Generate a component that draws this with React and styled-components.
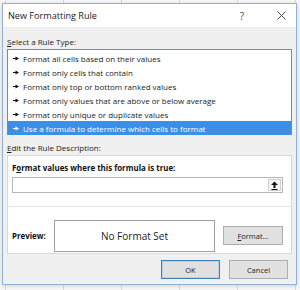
import React from "react";
import styled, { createGlobalStyle } from "styled-components";

const GlobalStyle = createGlobalStyle`
  html, body {
    margin: 0;
    padding: 0;
  }
  body {
    font-family: "Open Sans", "Noto Sans", sans-serif;
    color: #1b1b1b;
  }
`;

const rules = [
  "Format all cells based on their values",
  "Format only cells that contain",
  "Format only top or bottom ranked values",
  "Format only values that are above or below average",
  "Format only unique or duplicate values",
  "Use a formula to determine which cells to format",
];

const Page = styled.div`
  width: 300px;
  height: 290px;
  box-sizing: border-box;
  padding: 3px 3px 5px 2px;
  background-color: #f6f6f6;
  background-image: linear-gradient(90deg, #d9d9d9 1px, transparent 1px);
  background-size: 58px 100%;
  background-position: 5px 0;
`;

const Dialog = styled.div`
  width: 295px;
  height: 282px;
  box-sizing: border-box;
  border: 1px solid #8fb2dc;
  background: #f0f0f0;
  display: flex;
  flex-direction: column;
  box-shadow: 0 1px 4px rgba(0, 0, 0, 0.15);
`;

const TitleBar = styled.div`
  height: 23px;
  background: #fff;
  display: flex;
  align-items: center;
  padding: 0 10px 0 5px;
  font-size: 9.1px;
  color: #222;
`;

const Title = styled.span`
  flex: 1;
`;

const Help = styled.span`
  font-size: 10px;
  color: #444;
  margin-right: 33px;
`;

const Body = styled.div`
  flex: 1;
  display: flex;
  flex-direction: column;
  padding: 0 4px;
`;

const SectionLabel = styled.div`
  font-size: 8px;
  line-height: 12px;
  padding-top: ${(p) => p.top}px;
  margin-bottom: 1px;
  color: #222;
  u {
    text-decoration-thickness: 1px;
    text-underline-offset: 1px;
  }
`;

const List = styled.div`
  height: 86px;
  box-sizing: border-box;
  border: 1px solid #828790;
  background: #fff;
  padding: 1px 0 0 0;
`;

const Item = styled.div`
  height: 14px;
  display: flex;
  align-items: center;
  gap: 4px;
  padding-left: 5px;
  font-size: 8px;
  color: ${(p) => (p.selected ? "#fff" : "#222")};
  background: ${(p) => (p.selected ? "#3d8fe6" : "transparent")};
`;

const Panel = styled.div`
  height: 99px;
  box-sizing: border-box;
  border: 1px solid #d9d9d9;
  background: #fff;
  display: flex;
  flex-direction: column;
`;

const FormulaArea = styled.div`
  padding: 6px 8px 13px 4px;
  border-bottom: 1px solid #e3e3e3;
`;

const BoldLabel = styled.div`
  font-size: 7.9px;
  line-height: 12px;
  font-weight: 700;
  color: #111;
  margin-bottom: 3px;
`;

const Input = styled.div`
  height: 16px;
  box-sizing: border-box;
  border: 1px solid #b4b6bb;
  background: #fff;
  display: flex;
  justify-content: flex-end;
  align-items: center;
  padding-right: 1px;
`;

const CollapseButton = styled.div`
  width: 13px;
  height: 12px;
  box-sizing: border-box;
  border: 1px solid #d0d0d0;
  background: #f4f4f4;
  display: flex;
  align-items: center;
  justify-content: center;
`;

const PreviewRow = styled.div`
  flex: 1;
  display: flex;
  align-items: center;
  padding: 12px 8px 1px 4px;
`;

const PreviewLabel = styled.div`
  width: 42px;
  font-size: 7.9px;
  font-weight: 700;
  color: #111;
`;

const PreviewBox = styled.div`
  width: 161px;
  height: 32px;
  box-sizing: border-box;
  border: 1px solid #a0a0a0;
  display: flex;
  align-items: center;
  justify-content: center;
  font-size: 10px;
  color: #222;
  margin-right: 8px;
`;

const Button = styled.div`
  width: ${(p) => p.w || 59}px;
  height: 19px;
  box-sizing: border-box;
  border: 1px solid ${(p) => (p.primary ? "#3c7fbf" : "#adadad")};
  box-shadow: ${(p) => (p.primary ? "inset 0 0 0 1px #b7d3ef" : "none")};
  background: #e1e1e1;
  display: flex;
  align-items: center;
  justify-content: center;
  font-size: 7.5px;
  color: #222;
  u {
    text-decoration-thickness: 1px;
  }
`;

const ButtonRow = styled.div`
  display: flex;
  justify-content: flex-end;
  gap: 9px;
  margin: 6px 4px 0 0;
`;

const Arrow = ({ color }) => (
  <svg width="6" height="5" viewBox="0 0 6 5">
    <rect x="0" y="2" width="3" height="1" fill={color} />
    <path d="M2.5 0.5 L6 2.5 L2.5 4.5 Z" fill={color} />
  </svg>
);

const CloseIcon = () => (
  <svg width="9" height="9" viewBox="0 0 9 9">
    <path d="M0.5 0.5 L8.5 8.5 M8.5 0.5 L0.5 8.5" stroke="#333" strokeWidth="0.9" />
  </svg>
);

const UpIcon = () => (
  <svg width="7" height="9" viewBox="0 0 7 9">
    <path d="M3.5 0.5 L7 4 L4.5 4 L4.5 7 L2.5 7 L2.5 4 L0 4 Z" fill="#111" />
    <rect x="0.5" y="8" width="6" height="1" fill="#111" />
  </svg>
);

export default function App() {
  return (
    <>
      <GlobalStyle />
      <Page>
        <Dialog>
          <TitleBar>
            <Title>New Formatting Rule</Title>
            <Help>?</Help>
            <CloseIcon />
          </TitleBar>
          <Body>
            <SectionLabel top={9}>
              <u>S</u>elect a Rule Type:
            </SectionLabel>
            <List>
              {rules.map((r, i) => (
                <Item key={r} selected={i === rules.length - 1}>
                  <Arrow color={i === rules.length - 1 ? "#fff" : "#111"} />
                  {r}
                </Item>
              ))}
            </List>
            <SectionLabel top={7}>
              <u>E</u>dit the Rule Description:
            </SectionLabel>
            <Panel>
              <FormulaArea>
                <BoldLabel>
                  F<u>o</u>rmat values where this formula is true:
                </BoldLabel>
                <Input>
                  <CollapseButton>
                    <UpIcon />
                  </CollapseButton>
                </Input>
              </FormulaArea>
              <PreviewRow>
                <PreviewLabel>Preview:</PreviewLabel>
                <PreviewBox>No Format Set</PreviewBox>
                <Button w={60}>
                  <u>F</u>ormat...
                </Button>
              </PreviewRow>
            </Panel>
            <ButtonRow>
              <Button primary>OK</Button>
              <Button>Cancel</Button>
            </ButtonRow>
          </Body>
        </Dialog>
      </Page>
    </>
  );
}
